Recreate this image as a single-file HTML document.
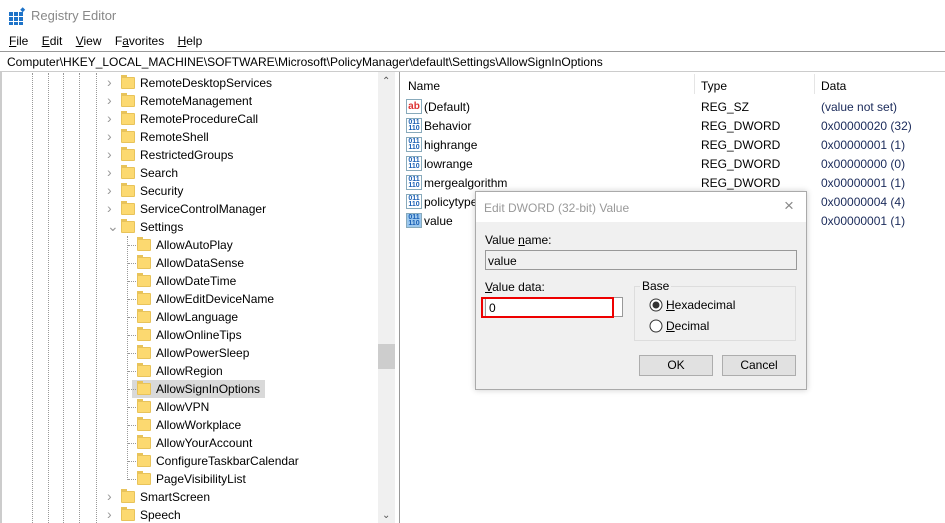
<!DOCTYPE html>
<html><head><style>
*{margin:0;padding:0;box-sizing:border-box}
body{width:945px;height:523px;overflow:hidden;background:#fff;font-family:"Liberation Sans",sans-serif;font-size:12px;color:#000;position:relative}
.a{position:absolute;white-space:nowrap}
.dv{position:absolute;width:0;border-left:1px dotted #999}
.dh{position:absolute;height:0;border-top:1px dotted #999;width:8px}
.fd{position:absolute;width:14px;height:12px;background:#fcd970;border:1px solid #e8c35a;border-radius:1px}
.fd:before{content:"";position:absolute;left:-1px;top:-3px;width:6px;height:3px;background:#e8c35a}
.chev{position:absolute;font-size:14px;color:#999}
.ic{position:absolute;width:16px;height:15px;border:1px solid #8ab;background:#fff;font-size:7px;line-height:6px;color:#1a5fb4;font-weight:bold;text-align:center;padding-top:1px}
u{text-decoration:underline}
</style></head><body>
<svg class="a" style="left:9px;top:7px" width="18" height="18"><g fill="#1e73c8"><rect x="0" y="5" width="4" height="4"/><rect x="5" y="5" width="4" height="4"/><rect x="10" y="5" width="4" height="4"/><rect x="0" y="10" width="4" height="4"/><rect x="5" y="10" width="4" height="4"/><rect x="10" y="10" width="4" height="4"/><rect x="0" y="15" width="4" height="3"/><rect x="5" y="15" width="4" height="3"/><rect x="10" y="15" width="4" height="3"/><rect x="12" y="1" width="3.5" height="3.5" transform="rotate(45 13.7 2.7)"/></g></svg>
<div class="a" style="left:31px;top:8px;font-size:13px;color:#888">Registry Editor</div>
<div class="a" style="left:9px;top:34px;font-size:12px"><u>F</u>ile&nbsp;&nbsp;&nbsp; <u>E</u>dit&nbsp;&nbsp;&nbsp; <u>V</u>iew&nbsp;&nbsp;&nbsp; F<u>a</u>vorites&nbsp;&nbsp;&nbsp; <u>H</u>elp</div>
<div class="a" style="left:0;top:51px;width:945px;height:21px;border-top:1px solid #999;border-bottom:1px solid #ccc"></div>
<div class="a" style="left:7px;top:55px">Computer\HKEY_LOCAL_MACHINE\SOFTWARE\Microsoft\PolicyManager\default\Settings\AllowSignInOptions</div>
<div class="a" style="left:0;top:72px;width:2px;height:451px;background:#ccc"></div>
<div class="dv" style="left:32px;top:73px;height:450px"></div>
<div class="dv" style="left:48px;top:73px;height:450px"></div>
<div class="dv" style="left:63px;top:73px;height:450px"></div>
<div class="dv" style="left:79px;top:73px;height:450px"></div>
<div class="dv" style="left:96px;top:73px;height:450px"></div>
<div class="dv" style="left:127px;top:236px;height:244px"></div>
<div class="a" style="left:378px;top:72px;width:17px;height:451px;background:#f0f0f0"></div>
<div class="a" style="left:382px;top:76px;font-size:10px;color:#555">&#8963;</div>
<div class="a" style="left:378px;top:344px;width:17px;height:25px;background:#cdcdcd"></div>
<div class="a" style="left:382px;top:510px;font-size:10px;color:#555">&#8964;</div>
<div class="a" style="left:132px;top:380px;width:133px;height:18px;background:#d9d9d9"></div>
<div id="tree"></div>
<div class="a" style="left:399px;top:72px;width:1px;height:451px;background:#999"></div>
<div class="a" style="left:694px;top:74px;width:1px;height:20px;background:#e5e5e5"></div>
<div class="a" style="left:814px;top:74px;width:1px;height:20px;background:#e5e5e5"></div>
<div class="a" style="left:408px;top:79px">Name</div>
<div class="a" style="left:701px;top:79px">Type</div>
<div class="a" style="left:821px;top:79px">Data</div>
<div id="vals"></div>
<div class="a" style="left:475px;top:191px;width:332px;height:199px;border:1px solid #aaa;background:#f0f0f0;box-shadow:0 0 6px rgba(0,0,0,.2)">
 <div class="a" style="left:0;top:0;width:330px;height:30px;background:#fff"></div>
 <div class="a" style="left:8px;top:9px;color:#999">Edit DWORD (32-bit) Value</div>
 <div class="a" style="left:308px;top:4px;font-size:17px;color:#888">&#215;</div>
 <div class="a" style="left:9px;top:41px">Value <u>n</u>ame:</div>
 <div class="a" style="left:9px;top:58px;width:312px;height:20px;border:1px solid #999;background:#f0f0f0;padding:3px 2px">value</div>
 <div class="a" style="left:9px;top:88px"><u>V</u>alue data:</div>
 <div class="a" style="left:9px;top:105px;width:138px;height:20px;border:1px solid #999;background:#fff"></div>
 <div class="a" style="left:5px;top:105px;width:133px;height:21px;border:2px solid #e00;padding:2px 6px">0</div>
 <div class="a" style="left:158px;top:94px;width:162px;height:55px;border:1px solid #ddd"></div>
 <div class="a" style="left:164px;top:87px;background:#f0f0f0;padding:0 2px">Base</div>
 <svg class="a" style="left:173px;top:106px" width="14" height="14"><circle cx="7" cy="7" r="6" fill="#fff" stroke="#333"/><circle cx="7" cy="7" r="3.5" fill="#333"/></svg>
 <div class="a" style="left:190px;top:106px"><u>H</u>exadecimal</div>
 <svg class="a" style="left:173px;top:127px" width="14" height="14"><circle cx="7" cy="7" r="6" fill="#fff" stroke="#333"/></svg>
 <div class="a" style="left:190px;top:127px"><u>D</u>ecimal</div>
 <div class="a" style="left:163px;top:163px;width:74px;height:21px;border:1px solid #adadad;background:#e1e1e1;text-align:center;line-height:19px">OK</div>
 <div class="a" style="left:246px;top:163px;width:74px;height:21px;border:1px solid #adadad;background:#e1e1e1;text-align:center;line-height:19px">Cancel</div>
</div>
<script>
var t=[["RemoteDesktopServices",0],["RemoteManagement",0],["RemoteProcedureCall",0],["RemoteShell",0],["RestrictedGroups",0],["Search",0],["Security",0],["ServiceControlManager",0],["Settings",2],["AllowAutoPlay",1],["AllowDataSense",1],["AllowDateTime",1],["AllowEditDeviceName",1],["AllowLanguage",1],["AllowOnlineTips",1],["AllowPowerSleep",1],["AllowRegion",1],["AllowSignInOptions",1],["AllowVPN",1],["AllowWorkplace",1],["AllowYourAccount",1],["ConfigureTaskbarCalendar",1],["PageVisibilityList",1],["SmartScreen",0],["Speech",0]];
var h="";t.forEach(function(r,i){var y=74+i*18;
if(r[1]==1){h+='<div class="dh" style="left:128px;top:'+(y+9)+'px"></div><div class="fd" style="left:137px;top:'+(y+3)+'px"></div><div class="a" style="left:156px;top:'+(y+2)+'px">'+r[0]+'</div>';}
else{h+='<div class="chev" style="left:107px;top:'+(y)+'px">'+(r[1]==2?'&#8964;':'&#8250;')+'</div><div class="fd" style="left:121px;top:'+(y+3)+'px"></div><div class="a" style="left:140px;top:'+(y+2)+'px">'+r[0]+'</div>';}});
document.getElementById("tree").innerHTML=h;
var v=[["(Default)","REG_SZ","(value not set)"],["Behavior","REG_DWORD","0x00000020 (32)"],["highrange","REG_DWORD","0x00000001 (1)"],["lowrange","REG_DWORD","0x00000000 (0)"],["mergealgorithm","REG_DWORD","0x00000001 (1)"],["policytype","REG_DWORD","0x00000004 (4)"],["value","REG_DWORD","0x00000001 (1)"]];
h="";v.forEach(function(r,i){var y=100+i*19;
h+=(i==0?'<div class="ic" style="left:406px;top:'+(y-1)+'px;color:#d33;font-size:10px;line-height:11px">ab</div>':'<div class="ic" style="left:406px;top:'+(y-1)+'px;'+(i==6?'background:#9cc8ee':'')+'">011<br>110</div>')+'<div class="a" style="left:424px;top:'+y+'px">'+r[0]+'</div><div class="a" style="left:701px;top:'+y+'px">'+r[1]+'</div><div class="a" style="left:821px;top:'+y+'px;color:#1a2a5a">'+r[2]+'</div>';});
document.getElementById("vals").innerHTML=h;
</script>
</body></html>
